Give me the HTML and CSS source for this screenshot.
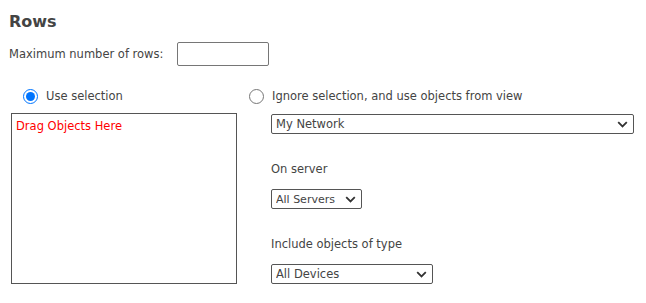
FILE: index.html
```html
<!DOCTYPE html>
<html lang="en">
<head>
    <meta charset="UTF-8">
    <title>Rows</title>
    <link rel="stylesheet" href="styles.css">
</head>
<body>
    <div class="panel">
        <h3 class="title">Rows</h3>

        <div class="max-row">
            <label for="maxRows">Maximum number of rows:</label>
            <input type="text" id="maxRows" class="text-input">
        </div>

        <div class="columns">
            <div class="col-left">
                <label class="radio">
                    <input type="radio" name="source" checked>
                    <span>Use selection</span>
                </label>
                <div class="drop-box">Drag Objects Here</div>
            </div>

            <div class="col-right">
                <label class="radio">
                    <input type="radio" name="source">
                    <span>Ignore selection, and use objects from view</span>
                </label>
                <div class="fields">
                    <select class="select select-view">
                        <option>My Network</option>
                    </select>

                    <div class="field-label">On server</div>
                    <select class="select select-server">
                        <option>All Servers</option>
                    </select>

                    <div class="field-label">Include objects of type</div>
                    <select class="select select-type">
                        <option>All Devices</option>
                    </select>
                </div>
            </div>
        </div>
    </div>
</body>
</html>
```

FILE: styles.css
```css
* {
    box-sizing: border-box;
}

body {
    margin: 0;
    padding: 9px;
    font-family: "DejaVu Sans", Verdana, sans-serif;
    font-size: 11.5px;
    color: #444;
    background: #fff;
}

.title {
    margin: 3px 0 0;
    font-size: 16px;
    font-weight: bold;
    color: #444;
}

.max-row {
    display: flex;
    align-items: center;
    gap: 14px;
    margin-top: 11px;
}

.text-input {
    width: 92px;
    height: 24px;
    border: 1px solid #767676;
    border-radius: 2px;
    margin: 0;
}

.columns {
    display: flex;
    margin-top: 22px;
}

.col-left {
    width: 240px;
    padding-left: 14px;
}

.col-right {
    flex: 1;
}

.radio {
    display: flex;
    align-items: center;
    gap: 8px;
    height: 16px;
}

.radio input {
    width: 15px;
    height: 15px;
    margin: 0;
    accent-color: #0075ff;
}

.drop-box {
    width: 226px;
    height: 171px;
    margin: 9px 0 0 -12px;
    border: 1px solid #555;
    padding: 5px 4px;
    color: #f00;
}

.fields {
    padding-left: 22px;
    margin-top: 10px;
}

.select {
    display: block;
    height: 20px;
    margin: 0;
    padding: 0 20px 0 4px;
    font-family: inherit;
    font-size: 11.5px;
    color: #444;
    border: 1px solid #555;
    border-radius: 2px;
    background: #fff url("data:image/svg+xml,%3Csvg xmlns='http://www.w3.org/2000/svg' width='11' height='7' viewBox='0 0 11 7'%3E%3Cpath d='M1.2 1.2 5.5 5.5l4.3-4.3' fill='none' stroke='%23333' stroke-width='1.8'/%3E%3C/svg%3E") no-repeat right 5px center;
    appearance: none;
}

.select-view {
    width: 363px;
}

.select-server {
    width: 91px;
    font-size: 11px;
}

.select-type {
    width: 162px;
}

.field-label {
    margin: 28px 0 13px;
}
```
